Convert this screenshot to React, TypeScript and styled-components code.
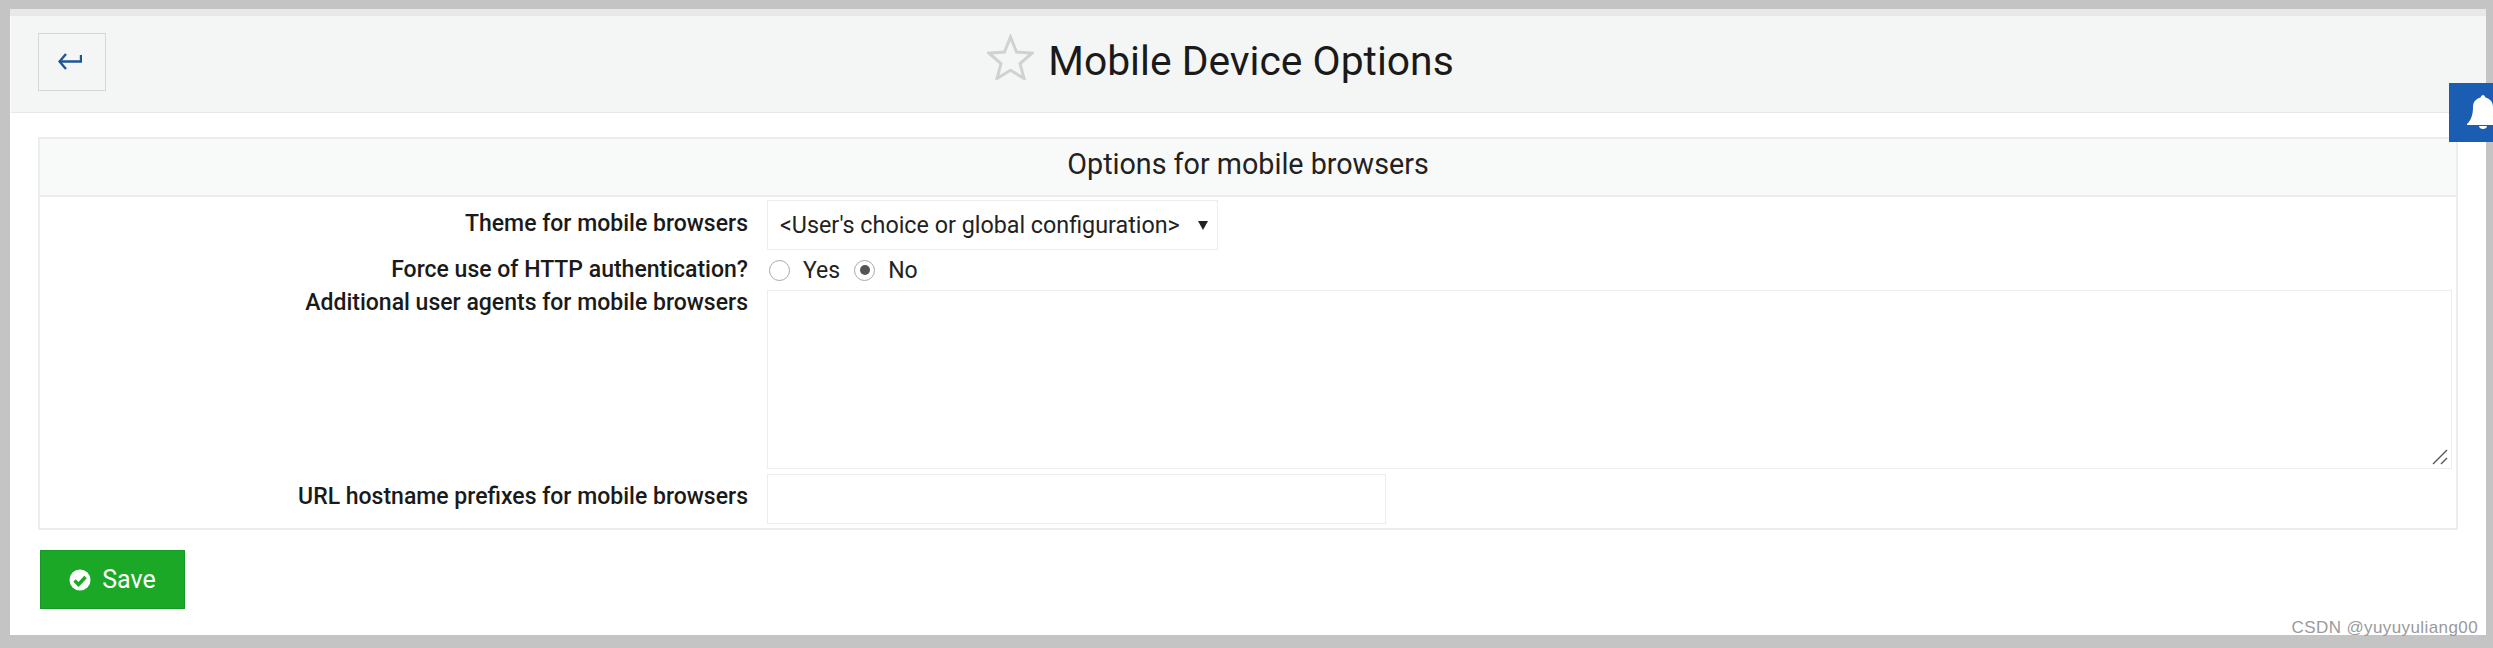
import React, { ReactElement } from 'react';
import styled, { createGlobalStyle } from 'styled-components';

const GlobalStyle = createGlobalStyle`
  html, body {
    margin: 0;
    padding: 0;
    width: 2493px;
    height: 648px;
    overflow: hidden;
    background: #c3c4c3;
  }
  * {
    box-sizing: border-box;
  }
`;

const Frame = styled.div`
  width: 2493px;
  height: 648px;
  padding: 9px 7px 13px 10px;
  font-family: Roboto, 'Liberation Sans', sans-serif;
  color: #1a1a1a;
`;

const Page = styled.div`
  position: relative;
  height: 626px;
  background: #fff;
  display: flex;
  flex-direction: column;
`;

const TopStrip = styled.div`
  height: 7px;
  background: #e8e8e8;
`;

const TitleBar = styled.div`
  position: relative;
  height: 97px;
  margin-left: 1px;
  background: #f4f6f5;
  border-bottom: 1px solid #e8e8e8;
  display: flex;
  align-items: center;
  justify-content: center;
  padding: 0 56px 6px 0;
`;

const BackButton = styled.button`
  position: absolute;
  left: 27px;
  top: 17px;
  width: 68px;
  height: 58px;
  padding: 0 5px 2px 0;
  background: #f4f6f5;
  border: 1px solid #d6d8d7;
  display: flex;
  align-items: center;
  justify-content: center;
`;

const Title = styled.h1`
  margin: 0;
  display: flex;
  align-items: center;
  gap: 14px;
  font-size: 40.8px;
  font-weight: 400;
  line-height: 48px;
  color: #1a1a1a;
`;

const StarIcon = styled.svg`
  margin-top: -8px;
`;

const Content = styled.div`
  padding: 24px 28px 0 28px;
`;

const Card = styled.section`
  border: 2px solid #ededed;
  height: 393px;
`;

const CardHeader = styled.div`
  height: 58px;
  background: #f8faf9;
  border-bottom: 2px solid #ededed;
  padding-bottom: 6px;
  display: flex;
  align-items: center;
  justify-content: center;
  font-size: 28.7px;
  color: #222;
`;

const Fields = styled.div`
  padding-top: 3px;
  display: flex;
  flex-direction: column;
`;

const Row = styled.div<{ $height: number; $top?: boolean }>`
  height: ${(p) => p.$height}px;
  display: grid;
  grid-template-columns: 708px 1fr;
  column-gap: 19px;
  align-items: ${(p) => (p.$top ? 'flex-start' : 'center')};
`;

const Label = styled.label<{ $lift?: number }>`
  text-align: right;
  font-size: 23px;
  font-weight: 500;
  line-height: 26px;
  color: #1a1a1a;
  padding-bottom: ${(p) => p.$lift ?? 0}px;
`;

const SelectBox = styled.div`
  width: 451px;
  height: 50px;
  border: 1px solid #ededed;
  background: #fff;
  padding: 0 9px 0 12px;
  display: flex;
  align-items: center;
  justify-content: space-between;
  font-size: 23.3px;
  color: #222;
`;

const Caret = styled.span`
  width: 0;
  height: 0;
  border-left: 5px solid transparent;
  border-right: 5px solid transparent;
  border-top: 9px solid #222;
`;

const Radios = styled.div`
  display: flex;
  align-items: center;
  padding-left: 2px;
  font-size: 23px;
  color: #222;
`;

const RadioMark = styled.span<{ $on?: boolean }>`
  width: 21px;
  height: 21px;
  border-radius: 50%;
  border: 1px solid #a8a8a8;
  background: #fff;
  margin-right: 13px;
  display: flex;
  align-items: center;
  justify-content: center;

  &::after {
    content: '';
    display: ${(p) => (p.$on ? 'block' : 'none')};
    width: 10px;
    height: 10px;
    border-radius: 50%;
    background: #555;
  }
`;

const RadioText = styled.span`
  margin-right: 14px;
`;

const TextArea = styled.div`
  position: relative;
  height: 179px;
  margin-right: 4px;
  border: 1px solid #ededed;
  background: #fff;
`;

const Grip = styled.svg`
  position: absolute;
  right: 3px;
  bottom: 3px;
`;

const TextInput = styled.div`
  width: 619px;
  height: 50px;
  border: 1px solid #ededed;
  background: #fff;
`;

const Actions = styled.div`
  margin-top: 20px;
  padding-left: 2px;
`;

const SaveButton = styled.button`
  width: 145px;
  height: 59px;
  background: #1ba826;
  border: 1px solid #19982a;
  color: #fff;
  font-family: inherit;
  font-size: 25px;
  display: flex;
  align-items: center;
  justify-content: center;
  gap: 11px;
  padding: 0;
`;

const BellTab = styled.div`
  position: absolute;
  right: -7px;
  top: 74px;
  width: 44px;
  height: 59px;
  background: #1a5db2;
  overflow: hidden;
`;

const BellIcon = styled.svg`
  position: absolute;
  left: 18px;
  top: 12px;
`;

const Watermark = styled.div`
  position: absolute;
  right: 8px;
  bottom: -3px;
  font-family: 'Liberation Sans', sans-serif;
  font-size: 17px;
  line-height: 20px;
  letter-spacing: 0.4px;
  color: #9a9a9a;
`;

function BackArrow(): ReactElement {
  return (
    <svg width="24" height="17" viewBox="0 0 24 17">
      <path d="M23 2v6.5H3" fill="none" stroke="#1f5598" strokeWidth="2.4" />
      <path d="M8 1 1.5 8.5 8 16" fill="none" stroke="#1f5598" strokeWidth="2.4" />
    </svg>
  );
}

function StarOutline(): ReactElement {
  return (
    <StarIcon width="47" height="46" viewBox="0 0 47 46">
      <path
        d="M23.5 3l6 15 15.5 1.2-12 10.3 4 15-13.5-8.2L10 44.5l4-15L2 19.2 17.5 18z"
        fill="none"
        stroke="#d0d2d1"
        strokeWidth="3"
      />
    </StarIcon>
  );
}

export default function App(): ReactElement {
  return (
    <Frame>
      <GlobalStyle />
      <Page>
        <TopStrip />
        <TitleBar>
          <BackButton>
            <BackArrow />
          </BackButton>
          <Title>
            <StarOutline />
            Mobile Device Options
          </Title>
        </TitleBar>
        <Content>
          <Card>
            <CardHeader>Options for mobile browsers</CardHeader>
            <Fields>
              <Row $height={50}>
                <Label $lift={2}>Theme for mobile browsers</Label>
                <SelectBox>
                  &lt;User's choice or global configuration&gt;
                  <Caret />
                </SelectBox>
              </Row>
              <Row $height={40}>
                <Label>Force use of HTTP authentication?</Label>
                <Radios>
                  <RadioMark />
                  <RadioText>Yes</RadioText>
                  <RadioMark $on />
                  <RadioText>No</RadioText>
                </Radios>
              </Row>
              <Row $height={184} $top>
                <Label>Additional user agents for mobile browsers</Label>
                <TextArea>
                  <Grip width="16" height="16" viewBox="0 0 16 16">
                    <path d="M1 15 15 1M9 15l6-6" stroke="#555" strokeWidth="1.4" />
                  </Grip>
                </TextArea>
              </Row>
              <Row $height={50}>
                <Label $lift={4}>URL hostname prefixes for mobile browsers</Label>
                <TextInput />
              </Row>
            </Fields>
          </Card>
          <Actions>
            <SaveButton>
              <svg width="22" height="22" viewBox="0 0 22 22">
                <circle cx="11" cy="11" r="10.5" fill="#fff" />
                <path d="M5.5 11.5 9.5 15.5 16.5 8" fill="none" stroke="#1ba826" strokeWidth="3.4" />
              </svg>
              Save
            </SaveButton>
          </Actions>
        </Content>
        <BellTab>
          <BellIcon width="34" height="36" viewBox="0 0 34 36">
            <path
              d="M16 0c1 0 2 1 2.4 2.500C23 3.500 26 7 26 12c0 8 2 13 6 17v1H0v-1c4-4 6-9 6-17C6 7 9 3.500 13.600 2.500 14 1 15 0 16 0z"
              fill="#fff"
            />
            <path d="M12 31h8c0 2-2 3-4 3s-4-1-4-3z" fill="#fff" />
          </BellIcon>
        </BellTab>
        <Watermark>CSDN @yuyuyuliang00</Watermark>
      </Page>
    </Frame>
  );
}
